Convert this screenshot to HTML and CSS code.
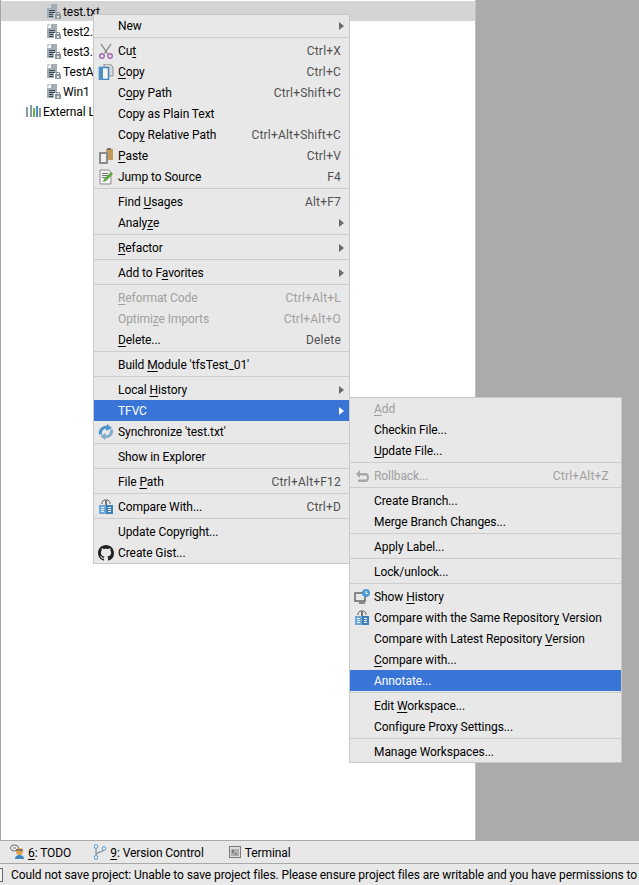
FILE: index.html
```html
<!DOCTYPE html>
<html lang="en">
<head>
<meta charset="utf-8">
<title>TFVC context menu</title>
<link rel="stylesheet" href="styles.css">
</head>
<body>
<svg class="defs" width="0" height="0">
  <defs>
    <symbol id="file" viewBox="0 0 16 16">
      <path d="M1 1h4L1 5z" fill="#c9ced2"/>
      <path d="M1 5h4V1h6v9H8v5H1z" fill="#a3adb5"/>
      <path d="M3 7h6v1H3zM3 9h6v1H3zM3 11h4v1H3zM3 13h4v1H3z" fill="#3c4a54"/>
      <rect x="9" y="11" width="6" height="5" fill="#8d979f"/>
      <path d="M10.500 11V9.500h3V11" fill="none" stroke="#8d979f"/>
      <rect x="11" y="13" width="2" height="2" fill="#e4e7e9"/>
    </symbol>
    <symbol id="compare" viewBox="0 0 16 16">
      <path d="M4 5V3l2-2h4l2 2v2" fill="none" stroke="#666"/>
      <path d="M7 1h2v5H7z" fill="#777"/>
      <rect x="1" y="6" width="14" height="9" fill="#6fa8d6"/>
      <path d="M8 6h7v9H8z" fill="#3f7fb5"/>
      <path d="M3 8h3v1H3zM3 10h3v1H3zM3 12h3v1H3zM10 8h3v1h-3zM10 10h3v1h-3zM10 12h3v1h-3z" fill="#eef3f7"/>
    </symbol>
  </defs>
</svg>
<div class="app">
  <main class="work">
    <section class="tree">
      <div class="node node-sel"><svg class="ficon"><use href="#file"/></svg><span>test.txt</span></div>
      <div class="node"><svg class="ficon"><use href="#file"/></svg><span>test2.txt</span></div>
      <div class="node"><svg class="ficon"><use href="#file"/></svg><span>test3.txt</span></div>
      <div class="node"><svg class="ficon"><use href="#file"/></svg><span>TestApp</span></div>
      <div class="node"><svg class="ficon"><use href="#file"/></svg><span>Win1</span></div>
      <div class="node node-lib">
        <svg class="ficon" viewBox="0 0 16 16"><path d="M1 4h2v10H1z" fill="#8a9aa8"/><path d="M5 2h2v12H5z" fill="#8a9aa8"/><path d="M8 5h2v9H8z" fill="#6cb33f"/><path d="M11 3h2v11h-2z" fill="#4a90c8"/><path d="M14 5h2v9h-2z" fill="#8a9aa8"/></svg>
        <span>External Libraries</span>
      </div>
    </section>
    <div class="void"></div>
  </main>
  <div class="tools">
    <div class="tool tool-todo">
      <svg class="ticon" viewBox="0 0 16 16"><ellipse cx="4.500" cy="4" rx="4" ry="3" fill="#f2f2f2" stroke="#666"/><path d="M3 3.500h3v1H3z" fill="#666"/><circle cx="9.500" cy="7.500" r="3.500" fill="#e0a050"/><path d="M6 5h7v2H6z" fill="#8a7a60"/><path d="M5 15c0-3 2-4 4.500-4s4.500 1 4.500 4z" fill="#3d85c0"/></svg>
      <span><u>6</u>: TODO</span>
    </div>
    <div class="tool tool-vcs">
      <svg class="ticon" viewBox="0 0 16 16"><path d="M4 3v10M4 11c0-4 8-2 8-6" fill="none" stroke="#8a98a4" stroke-width="1.300"/><circle cx="4" cy="2.500" r="1.800" fill="#fff" stroke="#4a90c8"/><circle cx="12" cy="4.500" r="1.800" fill="#fff" stroke="#4a90c8"/><circle cx="4" cy="13.500" r="1.800" fill="#fff" stroke="#4a90c8"/></svg>
      <span><u>9</u>: Version Control</span>
    </div>
    <div class="tool tool-term">
      <svg class="ticon" viewBox="0 0 16 16"><rect x="2.500" y="2.500" width="11" height="11" fill="#dcdcdc" stroke="#7a7a7a"/><rect x="4" y="5" width="8" height="7" fill="#b0b0b0"/><path d="M5 6l2 1.500L5 9M7.500 10H10" fill="none" stroke="#555"/></svg>
      <span>Terminal</span>
    </div>
  </div>
  <footer class="status">
    <span class="status-box"></span>
    <span class="status-text">Could not save project: Unable to save project files. Please ensure project files are writable and you have permissions to</span>
  </footer>
</div>

<nav class="menu menu-main">
  <div class="row"><span class="ic"></span><span class="lb">New</span><i class="arrow"></i></div>
  <hr class="sep">
  <div class="row"><span class="ic"><svg class="mi" viewBox="0 0 16 16"><path d="M3 1l6.500 9.500M13 1L6.500 10.500" stroke="#7d7d7d" stroke-width="1.300" fill="none"/><circle cx="4" cy="13" r="2.300" fill="none" stroke="#a06cb0" stroke-width="1.500"/><circle cx="12" cy="13" r="2.300" fill="none" stroke="#a06cb0" stroke-width="1.500"/></svg></span><span class="lb">Cu<u>t</u></span><span class="key">Ctrl+X</span></div>
  <div class="row"><span class="ic"><svg class="mi" viewBox="0 0 16 16"><path d="M6 0h6l3 3v9H6z" fill="#d8d8d8" stroke="#8f8f8f"/><path d="M1.500 3.500h9v12h-9z" fill="#f4f6f8" stroke="#3d85c0" stroke-width="1.500"/><path d="M1 3h4v13H1z" fill="#4d90c4"/></svg></span><span class="lb"><u>C</u>opy</span><span class="key">Ctrl+C</span></div>
  <div class="row"><span class="ic"></span><span class="lb">C<u>o</u>py Path</span><span class="key">Ctrl+Shift+C</span></div>
  <div class="row"><span class="ic"></span><span class="lb">Copy as Plain Text</span></div>
  <div class="row"><span class="ic"></span><span class="lb">Cop<u>y</u> Relative Path</span><span class="key">Ctrl+Alt+Shift+C</span></div>
  <div class="row"><span class="ic"><svg class="mi" viewBox="0 0 16 16"><path d="M8 1h7v11H8z" fill="#c89a5a"/><path d="M9 0h4v2H9z" fill="#777"/><path d="M1 4h9v12H1z" fill="#8c8c8c"/><path d="M3 6h5v8H3z" fill="#f0f0f0"/></svg></span><span class="lb"><u>P</u>aste</span><span class="key">Ctrl+V</span></div>
  <div class="row"><span class="ic"><svg class="mi" viewBox="0 0 16 16"><path d="M2 1h9l2 2v12H2z" fill="#f2f2f2" stroke="#8c8c8c"/><path d="M4 4h6v1H4zM4 6h6v1H4zM4 8h4v1H4z" fill="#777"/><path d="M5 13l1-3 7-7 2 2-7 7z" fill="#5fa83c"/></svg></span><span class="lb">Jump to Source</span><span class="key">F4</span></div>
  <hr class="sep">
  <div class="row"><span class="ic"></span><span class="lb">Find <u>U</u>sages</span><span class="key">Alt+F7</span></div>
  <div class="row"><span class="ic"></span><span class="lb">Analy<u>z</u>e</span><i class="arrow"></i></div>
  <hr class="sep">
  <div class="row"><span class="ic"></span><span class="lb"><u>R</u>efactor</span><i class="arrow"></i></div>
  <hr class="sep">
  <div class="row"><span class="ic"></span><span class="lb">Add to F<u>a</u>vorites</span><i class="arrow"></i></div>
  <hr class="sep">
  <div class="row off"><span class="ic"></span><span class="lb"><u>R</u>eformat Code</span><span class="key">Ctrl+Alt+L</span></div>
  <div class="row off"><span class="ic"></span><span class="lb">Optimi<u>z</u>e Imports</span><span class="key">Ctrl+Alt+O</span></div>
  <div class="row"><span class="ic"></span><span class="lb"><u>D</u>elete...</span><span class="key">Delete</span></div>
  <hr class="sep">
  <div class="row"><span class="ic"></span><span class="lb">Build <u>M</u>odule 'tfsTest_01'</span></div>
  <hr class="sep">
  <div class="row"><span class="ic"></span><span class="lb">Local <u>H</u>istory</span><i class="arrow"></i></div>
  <div class="row sel"><span class="ic"></span><span class="lb">TFVC</span><i class="arrow"></i></div>
  <div class="row"><span class="ic"><svg class="mi" viewBox="0 0 16 16"><path d="M2.500 10.500C1.500 6 5 2.500 10 3.500" fill="none" stroke="#4d94cc" stroke-width="3"/><path d="M9 0l5 4-6 3z" fill="#4d94cc"/><path d="M13.500 5.500C14.500 10 11 13.500 6 12.500" fill="none" stroke="#86aecb" stroke-width="3"/><path d="M7 16l-5-4 6-3z" fill="#86aecb"/></svg></span><span class="lb">Synchronize 'test.txt'</span></div>
  <hr class="sep">
  <div class="row"><span class="ic"></span><span class="lb">Show in Explorer</span></div>
  <hr class="sep">
  <div class="row"><span class="ic"></span><span class="lb">File <u>P</u>ath</span><span class="key">Ctrl+Alt+F12</span></div>
  <hr class="sep">
  <div class="row"><span class="ic"><svg class="mi"><use href="#compare"/></svg></span><span class="lb">Compare With...</span><span class="key">Ctrl+D</span></div>
  <hr class="sep">
  <div class="row"><span class="ic"></span><span class="lb">Update Copyright...</span></div>
  <div class="row"><span class="ic"><svg class="mi" viewBox="0 0 16 16"><path fill="#222" d="M8 0C3.580 0 0 3.580 0 8c0 3.540 2.290 6.530 5.470 7.590.4.070.55-.17.55-.38 0-.19-.01-.82-.01-1.490-2.010.37-2.530-.49-2.690-.94-.09-.23-.48-.94-.82-1.130-.28-.15-.68-.52-.01-.53.63-.01 1.080.58 1.230.82.720 1.210 1.870.87 2.330.66.070-.52.280-.87.510-1.070-1.780-.2-3.640-.89-3.640-3.950 0-.87.310-1.590.820-2.150-.080-.2-.360-1.020.080-2.120 0 0 .67-.21 2.200.82.640-.18 1.320-.27 2-.27s1.360.09 2 .27c1.530-1.040 2.200-.82 2.200-.82.440 1.100.16 1.920.08 2.120.51.560.820 1.270.820 2.150 0 3.070-1.870 3.750-3.650 3.950.29.250.54.730.54 1.480 0 1.070-.01 1.930-.01 2.200 0 .21.150.46.550.38A8.013 8.013 0 0 0 16 8c0-4.420-3.580-8-8-8z"/></svg></span><span class="lb">Create Gist...</span></div>
</nav>

<nav class="menu menu-sub">
  <div class="row off"><span class="ic"></span><span class="lb"><u>A</u>dd</span></div>
  <div class="row"><span class="ic"></span><span class="lb">Checkin File...</span></div>
  <div class="row"><span class="ic"></span><span class="lb"><u>U</u>pdate File...</span></div>
  <hr class="sep">
  <div class="row off"><span class="ic"><svg class="mi" viewBox="0 0 16 16"><path d="M6 2L2 6l4 4V7.500h5c1.500 0 2 .8 2 2s-.5 2-2 2H4V14h7c3 0 4-2 4-4.500S14 5 11 5H6z" fill="#a8a8a8"/></svg></span><span class="lb">Rollback...</span><span class="key">Ctrl+Alt+Z</span></div>
  <hr class="sep">
  <div class="row"><span class="ic"></span><span class="lb">Create Branch...</span></div>
  <div class="row"><span class="ic"></span><span class="lb">Merge Branch Changes...</span></div>
  <hr class="sep">
  <div class="row"><span class="ic"></span><span class="lb">Apply Label...</span></div>
  <hr class="sep">
  <div class="row"><span class="ic"></span><span class="lb">Lock/unlock...</span></div>
  <hr class="sep">
  <div class="row"><span class="ic"><svg class="mi" viewBox="0 0 16 16"><path d="M1 4h10v8H1z" fill="#e8e8e8" stroke="#666" stroke-width="1.500"/><path d="M5 12h6v3H5z" fill="#888"/><circle cx="12" cy="4" r="4" fill="#4d9ad4"/><path d="M12 2v2.500h2" stroke="#fff" fill="none"/></svg></span><span class="lb">Show <u>H</u>istory</span></div>
  <div class="row"><span class="ic"><svg class="mi"><use href="#compare"/></svg></span><span class="lb">Compare with the Same Repositor<u>y</u> Version</span></div>
  <div class="row"><span class="ic"></span><span class="lb">Compare with Latest Repository <u>V</u>ersion</span></div>
  <div class="row"><span class="ic"></span><span class="lb"><u>C</u>ompare with...</span></div>
  <div class="row sel"><span class="ic"></span><span class="lb">Annotate...</span></div>
  <hr class="sep">
  <div class="row"><span class="ic"></span><span class="lb">Edit <u>W</u>orkspace...</span></div>
  <div class="row"><span class="ic"></span><span class="lb">Configure Proxy Settings...</span></div>
  <hr class="sep">
  <div class="row"><span class="ic"></span><span class="lb">Manage Workspaces...</span></div>
</nav>
</body>
</html>
```
FILE: styles.css
```css
* { box-sizing: border-box; }
html, body { margin: 0; padding: 0; height: 100%; overflow: hidden; }
body { font: 12px/21px Roboto, "Noto Sans", sans-serif; letter-spacing: -0.08px; color: #000; background: #fff; }
.defs { position: absolute; }
u { text-underline-offset: 2px; text-decoration-thickness: 1px; }

.app { display: flex; flex-direction: column; height: 885px; }
.work { flex: 1; display: flex; min-height: 0; }
.tree { width: 476px; padding-top: 1px; background: #fff; border-left: 1px solid #a6a6a6; border-right: 1px solid #c0c0c0; }
.void { flex: 1; background: #ababab; }

.node { display: flex; align-items: center; height: 20px; padding-left: 45px; gap: 1px; white-space: nowrap; overflow: hidden; }
.node span, .tool span, .status-text, .lb, .key { padding-top: 2px; }
.node-sel { background: #d4d4d4; }
.node-lib { padding-left: 24px; gap: 2px; }
.ficon { width: 16px; height: 16px; flex: none; }

.tools { display: flex; align-items: center; height: 24px; padding-left: 10px; background: #e8e8e8; border-top: 1px solid #a8a8a8; border-bottom: 1px solid #a8a8a8; }
.tool { display: flex; align-items: center; gap: 2px; }
.tool-vcs { margin-left: 21px; }
.tool-term { margin-left: 23px; }
.ticon { width: 16px; height: 16px; flex: none; }
.status { display: flex; align-items: center; height: 21px; gap: 8px; background: #e8e8e8; white-space: nowrap; overflow: hidden; }
.status-box { width: 3px; height: 14px; flex: none; border: 1px solid #666; border-left: 0; background: #f4f4f4; }

.menu { position: absolute; background: #e8e8e8; border: 1px solid #c8c8c8; white-space: nowrap; }
.menu-main { left: 93px; top: 14px; width: 257px; }
.menu-sub { left: 349px; top: 397px; width: 273px; }
.menu-sub .key { margin-right: 4px; }
.row { display: flex; align-items: center; height: 21px; padding-right: 8px; }
.ic { width: 24px; flex: none; display: flex; justify-content: center; }
.mi { width: 16px; height: 16px; display: block; }
.lb { flex: 1; }
.key { color: #505050; letter-spacing: 0.2px; }
.arrow { width: 0; height: 0; border-left: 5px solid #6a6a6a; border-top: 4px solid transparent; border-bottom: 4px solid transparent; margin-right: -3px; }
.off, .off .key { color: #a0a0a0; }
.sel { background: #3875d7; color: #fff; }
.sel .arrow { border-left-color: #fff; }
.sep { height: 4px; margin: 0; border: 0; background: linear-gradient(#e8e8e8 1px, #cdcdcd 1px, #cdcdcd 2px, #e8e8e8 2px); }
```
